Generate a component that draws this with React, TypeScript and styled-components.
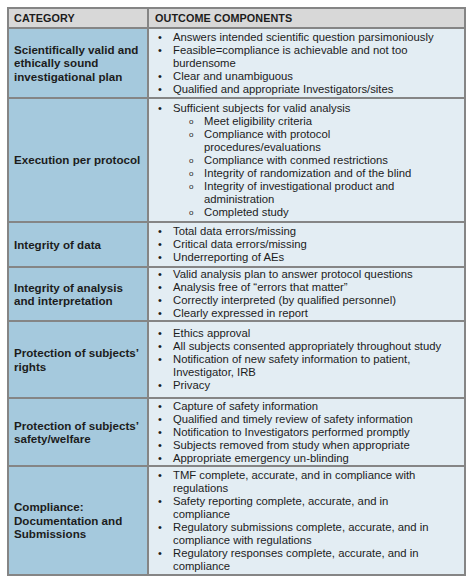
import React from "react";
import styled, { createGlobalStyle } from "styled-components";

const GlobalStyle = createGlobalStyle`
  html, body {
    margin: 0;
    padding: 0;
    background: #ffffff;
  }
  body {
    font-family: "Liberation Sans", Arial, sans-serif;
    color: #1c1c1c;
  }
`;

const Table = styled.div`
  margin: 7px 0 0 7px;
  width: 459px;
  display: grid;
  grid-template-columns: 138px 1fr;
  gap: 2px;
  padding: 2px;
  box-sizing: border-box;
  background: #858585;
`;

const HeadCell = styled.div<{ $pad: number }>`
  background: #d8d8d8;
  height: 18px;
  display: flex;
  align-items: center;
  padding-left: ${(p) => p.$pad}px;
  font-weight: bold;
  font-size: 10.8px;
  letter-spacing: 0.1px;
`;

const CategoryCell = styled.div<{ $h: number }>`
  background: #a5c9dd;
  height: ${(p) => p.$h}px;
  display: flex;
  align-items: center;
  padding: 0 6px 0 5px;
  font-weight: bold;
  font-size: 11.6px;
  line-height: 13.5px;
  white-space: pre-line;
`;

const OutcomeCell = styled.div`
  background: #e3edf3;
  display: flex;
  align-items: center;
  padding-left: 6px;
`;

const List = styled.ul<{ $sub?: boolean }>`
  list-style: none;
  margin: 0;
  padding: 0 0 0 ${(p) => (p.$sub ? 33 : 0)}px;
  font-size: 11.3px;
  line-height: 13px;
`;

const Item = styled.li`
  display: flex;
  flex-direction: column;
`;

const Line = styled.div<{ $sub?: boolean }>`
  display: flex;
  white-space: pre-line;
  &::before {
    content: "${(p) => (p.$sub ? "o" : "•")}";
    flex: 0 0 ${(p) => (p.$sub ? 16 : 18)}px;
    padding-left: ${(p) => (p.$sub ? 1 : 3)}px;
    box-sizing: border-box;
    font-size: ${(p) => (p.$sub ? "8px" : "11px")};
  }
`;

type Entry = { text: string; sub?: string[] };

type Row = { category: string; h: number; items: Entry[] };

const rows: Row[] = [
  {
    category: "Scientifically valid and\nethically sound\ninvestigational plan",
    h: 68,
    items: [
      { text: "Answers intended scientific question parsimoniously" },
      { text: "Feasible=compliance is achievable and not too\nburdensome" },
      { text: "Clear and unambiguous" },
      { text: "Qualified and appropriate Investigators/sites" },
    ],
  },
  {
    category: "Execution per protocol",
    h: 122,
    items: [
      {
        text: "Sufficient subjects for valid analysis",
        sub: [
          "Meet eligibility criteria",
          "Compliance with protocol\nprocedures/evaluations",
          "Compliance with conmed restrictions",
          "Integrity of randomization and of the blind",
          "Integrity of investigational product and\nadministration",
          "Completed study",
        ],
      },
    ],
  },
  {
    category: "Integrity of data",
    h: 43,
    items: [
      { text: "Total data errors/missing" },
      { text: "Critical data errors/missing" },
      { text: "Underreporting of AEs" },
    ],
  },
  {
    category: "Integrity of analysis\nand interpretation",
    h: 52,
    items: [
      { text: "Valid analysis plan to answer protocol questions" },
      { text: "Analysis free of \u201Cerrors that matter\u201D" },
      { text: "Correctly interpreted (by qualified personnel)" },
      { text: "Clearly expressed in report" },
    ],
  },
  {
    category: "Protection of subjects\u2019\nrights",
    h: 75,
    items: [
      { text: "Ethics approval" },
      { text: "All subjects consented appropriately throughout study" },
      { text: "Notification of new safety information to patient,\nInvestigator, IRB" },
      { text: "Privacy" },
    ],
  },
  {
    category: "Protection of subjects\u2019\nsafety/welfare",
    h: 66,
    items: [
      { text: "Capture of safety information" },
      { text: "Qualified and timely review of safety information" },
      { text: "Notification to Investigators performed promptly" },
      { text: "Subjects removed from study when appropriate" },
      { text: "Appropriate emergency un-blinding" },
    ],
  },
  {
    category: "Compliance:\nDocumentation and\nSubmissions",
    h: 107,
    items: [
      { text: "TMF complete, accurate, and in compliance with\nregulations" },
      { text: "Safety reporting complete, accurate, and in\ncompliance" },
      { text: "Regulatory submissions complete, accurate, and in\ncompliance with regulations" },
      { text: "Regulatory responses complete, accurate, and in\ncompliance" },
    ],
  },
];

const App = () => {
  return (
    <>
      <GlobalStyle />
      <Table>
        <HeadCell $pad={5}>CATEGORY</HeadCell>
        <HeadCell $pad={6}>OUTCOME COMPONENTS</HeadCell>
        {rows.map((row) => (
          <React.Fragment key={row.category}>
            <CategoryCell $h={row.h}>{row.category}</CategoryCell>
            <OutcomeCell>
              <List>
                {row.items.map((it) => (
                  <Item key={it.text}>
                    <Line>{it.text}</Line>
                    {it.sub && (
                      <List $sub>
                        {it.sub.map((s) => (
                          <Item key={s}>
                            <Line $sub>{s}</Line>
                          </Item>
                        ))}
                      </List>
                    )}
                  </Item>
                ))}
              </List>
            </OutcomeCell>
          </React.Fragment>
        ))}
      </Table>
    </>
  );
};

export default App;
